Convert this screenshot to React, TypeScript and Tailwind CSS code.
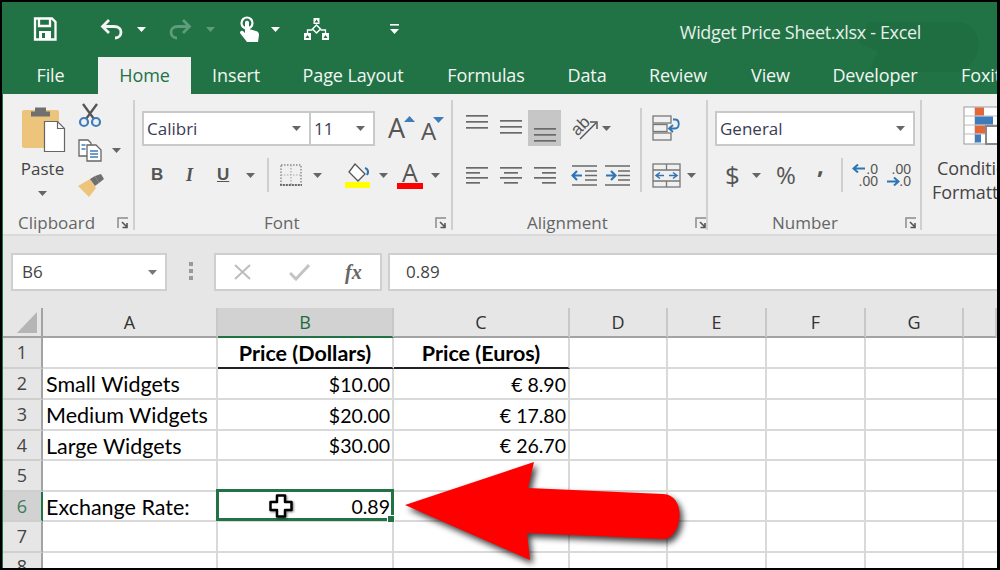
import React from "react";

const Caret = ({ c = "#666", className = "" }: { c?: string; className?: string }) => (
  <svg width="9" height="5" viewBox="0 0 9 5" className={"shrink-0 " + className}><path d="M0 0h9L4.5 5z" fill={c} /></svg>
);
const Launcher = ({ className = "" }: { className?: string }) => (
  <svg width="12" height="12" viewBox="0 0 12 12" className={"shrink-0 " + className} fill="none">
    <path d="M11 1H1v10" stroke="#8a8a8a" strokeWidth="1.5" /><path d="M5 5l5 5M10 6v4.5H5.5" stroke="#555" strokeWidth="1.6" />
  </svg>
);
const Lines = ({ w, ys, spans, className = "", h = 24 }: { w: number; h?: number; ys: number[]; spans: [number, number][]; className?: string }) => (
  <svg width={w} height={h} viewBox={`0 0 ${w} ${h}`} className={"shrink-0 " + className}>
    {ys.map((y, i) => <rect key={i} x={spans[i][0]} y={y} width={spans[i][1] - spans[i][0]} height="1.7" fill="#6a6a6a" />)}
  </svg>
);
const Sep = ({ h, className = "" }: { h: string; className?: string }) => <div className={"w-[2px] shrink-0 bg-[#cfcfcf] " + h + " " + className} />;

const tabs: [string, string][] = [
  ["File", "w-[95px]"], ["Home", "w-[93px]"], ["Insert", "w-[90px]"], ["Page Layout", "w-[144px]"], ["Formulas", "w-[122px]"],
  ["Data", "w-[80px]"], ["Review", "w-[102px]"], ["View", "w-[83px]"], ["Developer", "w-[126px]"],
];

const cols = ["A", "B", "C", "D", "E", "F", "G", ""];
const rows: string[][] = [
  ["", "Price (Dollars)", "Price (Euros)"],
  ["Small Widgets", "$10.00", "€ 8.90"],
  ["Medium Widgets", "$20.00", "€ 17.80"],
  ["Large Widgets", "$30.00", "€ 26.70"],
  ["", "", ""],
  ["Exchange Rate:", "0.89", ""],
  ["", "", ""],
  ["", "", ""],
];
const gridLine = "border-r-2 border-b-2 border-[#d9d9d9]";

function TitleBar() {
  return (
    <div className="relative h-[56px] shrink-0 flex items-center pb-[2px] text-white">
      <svg width="24" height="24" viewBox="0 0 24 24" className="ml-[30px] shrink-0" fill="none">
        <path d="M2 1.5h17l3.5 3.5v17.500H2z" stroke="#fff" strokeWidth="2.300" />
        <path d="M6 2v7h11V2" stroke="#fff" strokeWidth="2.300" />
        <rect x="6" y="14" width="12" height="8" fill="#fff" /><rect x="9" y="16" width="3" height="5" fill="#217346" />
      </svg>
      <svg width="24" height="22" viewBox="0 0 24 22" className="ml-[43px] shrink-0" fill="none" stroke="#f4f4f4" strokeWidth="2.800">
        <path d="M9 2L2.500 8.500 9 15" /><path d="M3 8.500h11c5 0 7 3 7 5.500 0 3-2 6-6 6" />
      </svg>
      <Caret c="#fff" className="ml-[13px]" />
      <svg width="24" height="22" viewBox="0 0 24 22" className="ml-[22px] shrink-0" fill="none" stroke="#5f9c7c" strokeWidth="2.800">
        <path d="M15 2l6.500 6.500L15 15" /><path d="M21 8.500H10c-5 0-7 3-7 5.500 0 3 2 6 6 6" />
      </svg>
      <Caret c="#5f9c7c" className="ml-[14px]" />
      <svg width="21" height="26" viewBox="0 0 21 26" className="ml-[24px] shrink-0">
        <circle cx="8" cy="7" r="5.500" fill="none" stroke="#fff" strokeWidth="2.200" />
        <path d="M6 6.500c0-2.500 4-2.500 4 0V13l7 2c2 .6 3 2 3 4l-1 7H8L1 17c0-2 2-3 3.500-1.500L6 17z" fill="#fff" />
      </svg>
      <Caret c="#fff" className="ml-[11px]" />
      <svg width="25" height="22" viewBox="0 0 25 22" className="ml-[24px] shrink-0" fill="#fff">
        <rect x="9.500" y="0" width="6" height="6" /><rect x="0" y="15" width="7" height="7" /><rect x="18" y="15" width="7" height="7" />
        <path d="M12.500 7l4 4-4 4-4-4z" fill="none" stroke="#fff" strokeWidth="1.500" />
        <path d="M3.500 15v-3h5M21.500 15v-3h-5" fill="none" stroke="#fff" strokeWidth="1.300" />
        <path d="M12.500 1.500l2 3h-4zM3.500 17l2 3h-4zM21.500 17l2 3h-4z" fill="#217346" />
      </svg>
      <svg width="9" height="11" viewBox="0 0 9 11" className="ml-[61px] shrink-0" fill="#fff"><rect width="9" height="1.600" /><path d="M0 5h9l-4.500 5z" /></svg>
      <span className="ml-auto mr-[76px] mt-[6px] text-[18px] tracking-[-0.33px] text-[#e6efe9]">Widget Price Sheet.xlsx - Excel</span>
    </div>
  );
}

function Tabs() {
  return (
    <div className="h-[36px] shrink-0 flex text-[18px] text-[#f2f6f3] tracking-[-0.1px]">
      {tabs.map(([t, w]) =>
        t === "Home" ? (
          <div key={t} className={w + " shrink-0 -mt-[1px] h-[37px] bg-[#f0f0f0] text-[#217346] flex items-center justify-center pb-[1px] z-10"}>{t}</div>
        ) : (
          <div key={t} className={w + " shrink-0 flex items-center justify-center pb-[2px]"}>{t}</div>
        )
      )}
      <div className="pl-[23px] flex items-center pb-[2px]">Foxit</div>
    </div>
  );
}

function Label({ text, w, ml, launcher, lml }: { text: string; w?: string; ml: string; launcher?: boolean; lml?: string }) {
  return (
    <div className="h-[18px] shrink-0 flex items-center text-[17px] text-[#666]">
      <span className={ml + " shrink-0 " + (w || "")}>{text}</span>
      {launcher && <Launcher className={lml} />}
    </div>
  );
}

function Combo({ text, w, caretMl = "ml-auto mr-[8px]", className = "" }: { text: string; w: string; caretMl?: string; className?: string }) {
  return (
    <div className={w + " h-[35px] shrink-0 bg-white border-2 border-[#c9c9c9] flex items-center pl-[3px] text-[17px] text-[#3b3b55] " + className}>
      <span>{text}</span>
      <Caret className={caretMl} />
    </div>
  );
}

function Clipboard() {
  return (
    <div className="w-[132px] shrink-0 border-r-2 border-[#cfcfcf] flex flex-col h-[130px]">
      <div className="h-[114px] shrink-0 flex">
        <div className="ml-[14px] w-[51px] shrink-0 flex flex-col items-center">
          <svg width="44" height="46" viewBox="0 0 44 46" className="mt-[6px] ml-[2px]">
            <rect x="0" y="4" width="37" height="38" rx="2" fill="#edc47c" />
            <path d="M13 1.500h11v4h4v5H9v-5h4z" fill="#707070" />
            <path d="M22.500 15.500h13l7 7v23h-20z" fill="#fff" stroke="#666" strokeWidth="1.200" />
            <path d="M35.500 15.500v7h7" fill="none" stroke="#666" strokeWidth="1.200" />
          </svg>
          <span className="mt-[6px] h-[22px] text-[17px] leading-[22px] text-[#444]">Paste</span>
          <Caret className="mt-[11px]" />
        </div>
        <div className="ml-[10px] flex flex-col">
          <svg width="24" height="25" viewBox="0 0 24 25" className="mt-[3px]" fill="none">
            <path d="M8 16L19 1M16 16L5 1" stroke="#555" strokeWidth="2.300" />
            <circle cx="6" cy="19" r="4" stroke="#3f7cbb" strokeWidth="2.200" /><circle cx="18" cy="19" r="4" stroke="#3f7cbb" strokeWidth="2.200" />
          </svg>
          <div className="mt-[11px] h-[23px] flex items-center">
            <svg width="25" height="23" viewBox="0 0 25 23" fill="none">
              <path d="M1 1h9l3 3v13H1z" fill="#fff" stroke="#666" strokeWidth="1.300" />
              <path d="M9 6h9l5 5v11H9z" fill="#fff" stroke="#666" strokeWidth="1.300" />
              <path d="M12 12h8M12 15h8M12 18h8" stroke="#3f7cbb" strokeWidth="1.400" />
              <path d="M3.500 6h4M3.500 10h4" stroke="#3f7cbb" strokeWidth="1.400" />
            </svg>
            <Caret className="ml-[9px]" />
          </div>
          <svg width="26" height="23" viewBox="0 0 26 23" className="mt-[12px]">
            <path d="M0 12l12-7 6 9-7 9z" fill="#edc47c" />
            <path d="M12 5l5-3 4 7-4 3z" fill="#6f6f6f" /><path d="M17 2l6-2 3 5-5 4z" fill="#6f6f6f" />
          </svg>
        </div>
      </div>
      <Label text="Clipboard" ml="ml-[15px]" w="w-[99px]" launcher />
    </div>
  );
}

function Font() {
  return (
    <div className="w-[318px] shrink-0 border-r-2 border-[#cfcfcf] flex flex-col h-[130px]">
      <div className="h-[114px] shrink-0 pt-[11px] flex flex-col">
        <div className="flex items-center h-[35px]">
          <Combo text="Calibri" w="w-[169px]" className="ml-[7px]" />
          <Combo text="11" w="w-[66px]" className="-ml-[2px]" />
          <div className="ml-[13px] relative w-[32px] h-[35px] flex items-center text-[27px] text-[#555]">
            A
            <svg width="11" height="6" viewBox="0 0 11 6" className="absolute left-[16px] top-[5px]"><path d="M5.500 0L11 6H0z" fill="#3f7cbb" /></svg>
          </div>
          <div className="ml-[3px] relative w-[32px] h-[35px] flex items-center pt-[4px] text-[24px] text-[#555]">
            A
            <svg width="11" height="6" viewBox="0 0 11 6" className="absolute left-[12px] top-[6px]"><path d="M0 0h11L5.500 6z" fill="#3f7cbb" /></svg>
          </div>
        </div>
        <div className="mt-[12px] h-[34px] flex items-center text-[17px] text-[#555]">
          <span className="ml-[16px] w-[14px] font-bold font-['Liberation_Sans',sans-serif]">B</span>
          <span className="ml-[21px] w-[10px] italic font-bold font-['Liberation_Serif',serif] text-[18px]">I</span>
          <span className="ml-[21px] w-[15px] font-bold underline font-['Liberation_Sans',sans-serif]">U</span>
          <Caret className="ml-[14px]" />
          <Sep h="h-[34px]" className="ml-[12px]" />
          <svg width="22" height="22" viewBox="0 0 22 22" className="ml-[11px] shrink-0" fill="none">
            <rect x="1" y="1" width="20" height="20" stroke="#888" strokeWidth="1.400" strokeDasharray="1.500 1.500" />
            <path d="M11 1v20M1 11h20" stroke="#aaa" strokeWidth="1.200" strokeDasharray="1.500 1.500" />
            <path d="M0 21h22" stroke="#555" strokeWidth="1.600" strokeDasharray="2 1" />
          </svg>
          <Caret className="ml-[11px]" />
          <svg width="25" height="25" viewBox="0 0 25 25" className="ml-[23px] shrink-0" fill="none">
            <path d="M10 1l10 10-7 7-9-9z" fill="#fff" stroke="#555" strokeWidth="1.300" />
            <path d="M20 5c3 1 4 4 2 7" stroke="#2f75b5" strokeWidth="2.200" />
            <rect x="0" y="19" width="25" height="6" fill="#ffff00" />
          </svg>
          <Caret className="ml-[9px]" />
          <div className="ml-[9px] relative w-[26px] h-[28px] flex justify-center text-[25px] leading-[22px] text-[#555]">
            A
            <div className="absolute left-0 bottom-0 w-[26px] h-[6px] bg-[#ff0000]" />
          </div>
          <Caret className="ml-[8px]" />
        </div>
      </div>
      <Label text="Font" ml="ml-[129px]" w="w-[171px]" launcher />
    </div>
  );
}

function Alignment() {
  const l: [number, number][] = [[0, 22], [0, 22], [0, 22], [0, 22]];
  return (
    <div className="w-[255px] shrink-0 border-r-2 border-[#cfcfcf] flex flex-col h-[130px]">
      <div className="h-[114px] shrink-0 flex">
        <div className="w-[187px] shrink-0 flex flex-col pt-[10px]">
          <div className="h-[36px] flex items-center">
            <Lines w={22} h={36} ys={[5, 11, 17]} spans={l} className="ml-[13px]" />
            <Lines w={22} h={36} ys={[10, 16, 22]} spans={l} className="ml-[12px]" />
            <div className="ml-[6px] w-[33px] h-[36px] bg-[#c6c6c6] flex justify-center">
              <Lines w={22} h={36} ys={[18, 24, 30]} spans={l} />
            </div>
            <svg width="27" height="24" viewBox="0 0 27 24" className="ml-[10px] shrink-0">
              <text x="1" y="17" transform="rotate(-45 8 12)" fontSize="17" fontFamily="Liberation Sans" fill="#555">ab</text>
              <path d="M9 23L25 7" stroke="#555" strokeWidth="1.500" /><path d="M19 6l7 0 0 7" stroke="#555" strokeWidth="1.500" fill="none" />
            </svg>
            <Caret className="ml-[4px]" />
          </div>
          <div className="mt-[12px] h-[34px] flex items-center">
            <Lines w={22} h={18} ys={[1, 6, 11, 16]} spans={[[0, 22], [0, 14], [0, 22], [0, 14]]} className="ml-[13px]" />
            <Lines w={22} h={18} ys={[1, 6, 11, 16]} spans={[[0, 22], [4, 18], [0, 22], [4, 18]]} className="ml-[12px]" />
            <Lines w={22} h={18} ys={[1, 6, 11, 16]} spans={[[0, 22], [8, 22], [0, 22], [8, 22]]} className="ml-[12px]" />
            <svg width="26" height="21" viewBox="0 0 26 21" className="ml-[15px] shrink-0" fill="none">
              <path d="M1 1h25M14 6h12M14 10.500h12M14 15h12M1 20h25" stroke="#6a6a6a" strokeWidth="1.600" />
              <path d="M11 10.500H2M6 6l-4.500 4.500L6 15" stroke="#2f75b5" strokeWidth="2.200" />
            </svg>
            <svg width="26" height="21" viewBox="0 0 26 21" className="ml-[8px] shrink-0" fill="none">
              <path d="M0 1h25M13 6h12M13 10.500h12M13 15h12M0 20h25" stroke="#6a6a6a" strokeWidth="1.600" />
              <path d="M1 10.500h9M6 6l4.500 4.500L6 15" stroke="#2f75b5" strokeWidth="2.200" />
            </svg>
          </div>
        </div>
        <Sep h="h-[84px]" className="mt-[8px]" />
        <div className="flex flex-col ml-[10px] pt-[15px]">
          <svg width="29" height="26" viewBox="0 0 29 26" fill="none">
            <rect x="1" y="1" width="18" height="7" stroke="#777" strokeWidth="1.300" /><rect x="1" y="9.500" width="14" height="7" stroke="#777" strokeWidth="1.300" /><rect x="1" y="18" width="18" height="7" stroke="#777" strokeWidth="1.300" />
            <path d="M21 4.500h2c5 0 5 9 0 9h-5M21 10l-4 3.500 4 3.500" stroke="#2f75b5" strokeWidth="1.800" />
          </svg>
          <div className="mt-[22px] flex items-center">
            <svg width="29" height="25" viewBox="0 0 29 25" fill="none">
              <rect x="1" y="1" width="27" height="23" stroke="#777" strokeWidth="1.300" />
              <path d="M1 7h27M1 18h27M14.500 1v6M14.500 18v6" stroke="#777" strokeWidth="1.300" />
              <path d="M4 12.500h8M8 9.500l-4 3 4 3M25 12.500h-8M21 9.500l4 3-4 3" stroke="#2f75b5" strokeWidth="1.500" />
            </svg>
            <Caret className="ml-[6px]" />
          </div>
        </div>
      </div>
      <Label text="Alignment" ml="ml-[74px]" w="w-[168px]" launcher />
    </div>
  );
}

function NumberGroup() {
  return (
    <div className="w-[214px] shrink-0 border-r-2 border-[#cfcfcf] flex flex-col h-[130px]">
      <div className="h-[114px] shrink-0 pt-[11px] flex flex-col">
        <Combo text="General" w="w-[200px]" className="ml-[7px]" />
        <div className="mt-[12px] h-[34px] flex items-center text-[#555]">
          <span className="ml-[17px] w-[16px] text-[26px] leading-[34px]">$</span>
          <Caret className="ml-[11px]" />
          <span className="ml-[15px] w-[24px] text-[24px] leading-[34px]">%</span>
          <span className="ml-[17px] w-[8px] text-[24px] font-bold leading-[34px] -translate-y-[10px]">,</span>
          <Sep h="h-[34px]" className="ml-[16px]" />
          <div className="ml-[9px] w-[26px] h-[24px] relative text-[14px] leading-[12px] text-[#555] font-['Liberation_Sans',sans-serif]">
            <div className="text-right">.0</div><div className="text-right">.00</div>
            <svg width="13" height="9" viewBox="0 0 13 9" className="absolute left-0 top-[1px]" fill="none"><path d="M13 4.500H2M6 .5l-4.500 4L6 8.500" stroke="#2f75b5" strokeWidth="2" /></svg>
          </div>
          <div className="ml-[9px] w-[24px] h-[24px] relative text-[14px] leading-[12px] text-[#555] font-['Liberation_Sans',sans-serif]">
            <div className="text-right">.00</div><div className="text-right">.0</div>
            <svg width="13" height="9" viewBox="0 0 13 9" className="absolute left-0 top-[14px]" fill="none"><path d="M0 4.500h11M7 .5l4.500 4-4.500 4" stroke="#2f75b5" strokeWidth="2" /></svg>
          </div>
        </div>
      </div>
      <Label text="Number" ml="ml-[64px]" w="w-[133px]" launcher />
    </div>
  );
}

function Styles() {
  return (
    <div className="flex-1 min-w-0 overflow-hidden flex flex-col">
      <div className="ml-[41px] mt-[6px] w-[48px] h-[39px] shrink-0 relative">
        <svg width="48" height="39" viewBox="0 0 48 39">
          <rect x="1" y="1" width="46" height="37" fill="#fff" stroke="#999" />
          <path d="M1 10h46M1 19h46M1 28h46M12 1v37" stroke="#bbb" />
          <rect x="12" y="1.500" width="9" height="8" fill="#e2683c" /><rect x="12" y="10.500" width="18" height="8" fill="#3f7cbb" />
          <rect x="12" y="19.500" width="14" height="8" fill="#e2683c" /><rect x="12" y="28.500" width="6" height="8" fill="#3f7cbb" />
        </svg>
        <div className="absolute left-[22px] top-[19px] w-[26px] h-[20px] bg-white border-2 border-[#888]" />
      </div>
      <div className="ml-[10px] mt-[11px] w-[120px] text-[18px] leading-[24px] text-[#444] whitespace-nowrap tracking-[-0.1px]">
        <div className="pl-[5px]">Conditional</div>
        <div>Formatting</div>
      </div>
    </div>
  );
}

function FormulaBar() {
  return (
    <div className="h-[72px] shrink-0 bg-[#e6e6e6] pt-[17px]">
      <div className="flex h-[38px] text-[17px] text-[#444]">
        <div className="ml-[8px] w-[156px] shrink-0 bg-white border-2 border-[#cfcfcf] flex items-center pl-[9px]">
          <span>B6</span><Caret c="#777" className="ml-auto mr-[8px]" />
        </div>
        <div className="w-[47px] shrink-0 flex flex-col items-center justify-center gap-[3px] pb-[3px]">
          <div className="w-[4px] h-[4px] bg-[#999]" /><div className="w-[4px] h-[4px] bg-[#999]" /><div className="w-[4px] h-[4px] bg-[#999]" />
        </div>
        <div className="w-[168px] shrink-0 bg-white border-2 border-[#cfcfcf] flex items-center">
          <svg width="18" height="16" viewBox="0 0 18 16" className="ml-[18px] shrink-0" fill="none"><path d="M1 1l15 14M16 1L1 15" stroke="#bdbdbd" strokeWidth="2" /></svg>
          <svg width="21" height="17" viewBox="0 0 21 17" className="ml-[37px] shrink-0" fill="none"><path d="M1 9l6 6L20 1" stroke="#c4c4c4" strokeWidth="3" /></svg>
          <span className="ml-[35px] italic font-bold text-[20px] text-[#666] font-['Liberation_Serif',serif]">fx</span>
        </div>
        <div className="ml-[6px] flex-1 bg-white border-y-2 border-l-2 border-[#cfcfcf] flex items-center pl-[16px]">0.89</div>
      </div>
    </div>
  );
}

function Sheet() {
  return (
    <div className="flex-1 min-h-0 overflow-hidden bg-white grid grid-cols-[40px_175px_176px_176px_98px_99px_99px_98px_1fr] grid-rows-[30px_31px_31px_31px_30px_31px_30px_31px_1fr] font-['Lato',sans-serif] text-[19.5px] text-black">
      <div className="bg-[#e6e6e6] border-r-2 border-b-2 border-[#a3a3a3] flex items-end justify-end pr-[4px] pb-[3px]">
        <svg width="20" height="21" viewBox="0 0 20 21"><path d="M20 0v21H0z" fill="#b5b5b5" /></svg>
      </div>
      {cols.map((c) => (
        <div key={"h" + c} className={(c === "B" ? "bg-[#d2d2d2] border-b-[#217346] text-[#1d6b40]" : "bg-[#e6e6e6] border-b-[#a3a3a3] text-[#333]") + " border-b-2 border-r-2 border-r-[#c8c8c8] flex items-center justify-center text-[18px] font-['Open_Sans',sans-serif]"}>{c}</div>
      ))}
      {rows.map((r, i) => (
        <React.Fragment key={i}>
          <div className={(i === 5 ? "bg-[#d2d2d2] text-[#3b7d5c] border-r-[#217346]" : "bg-[#e6e6e6] text-[#444] border-r-[#a3a3a3]") + " border-b-2 border-b-[#cfcfcf] border-r-2 flex items-center justify-center text-[18px] font-['Open_Sans',sans-serif]"}>{i + 1}</div>
          <div className={gridLine + " flex items-center pl-[3px] pt-[2px] text-[21.5px] whitespace-nowrap"}>{r[0]}</div>
          <div className={"relative flex items-center pt-[2px] whitespace-nowrap " + (i === 0 ? "justify-center font-bold text-[21.5px] border-r-2 border-r-[#d9d9d9] border-b-2 border-b-[#222]" : "justify-end pr-[2px] " + gridLine)}>
            {r[1]}
            {i === 5 && (
              <>
                <div className="absolute -left-[2px] -top-[3px] -right-[2px] -bottom-[1px] border-[3px] border-[#217346]" />
                <div className="absolute -right-[3px] -bottom-[3px] w-[8px] h-[8px] bg-[#217346] border border-white" />
                <svg width="24" height="24" viewBox="0 0 24 24" className="absolute left-[51px] top-[2px] drop-shadow-[1px_1px_1px_rgba(0,0,0,0.5)]">
                  <path d="M8 1.500h8v6.500h6.500v8H16v6.500H8V16H1.500V8H8z" fill="#fff" stroke="#000" strokeWidth="2.500" strokeLinejoin="round" />
                </svg>
              </>
            )}
          </div>
          <div className={"flex items-center pt-[2px] whitespace-nowrap " + (i === 0 ? "justify-center font-bold text-[21.5px] border-r-2 border-r-[#d9d9d9] border-b-2 border-b-[#222]" : "justify-end pr-[2px] " + gridLine)}>{r[2]}</div>
          {[0, 1, 2, 3].map((k) => <div key={k} className={gridLine} />)}
          <div className="border-b-2 border-[#d9d9d9]" />
        </React.Fragment>
      ))}
    </div>
  );
}

export default function App() {
  return (
    <div className="relative w-[1000px] h-[570px] overflow-hidden bg-black pt-[2px] pl-[2px] pr-[3px] pb-[2px] font-['Open_Sans','Noto_Sans',sans-serif]">
      <div className="relative w-full h-full overflow-hidden flex flex-col border-l border-[#217346] bg-[#217346]">
        <svg width="140" height="90" viewBox="0 0 140 90" className="absolute left-[845px] top-0"><path d="M20 20h90c25 0 30 40 0 50H20l10-20-20-10z" fill="#1e6a40" opacity="0.6" /></svg>
        <div className="relative flex flex-col">
          <TitleBar />
          <Tabs />
        </div>
        <div className="relative h-[142px] shrink-0 bg-[#f0f0f0] border-b-2 border-[#dadada] pt-[6px] flex text-[#444]">
          <Clipboard />
          <Font />
          <Alignment />
          <NumberGroup />
          <Styles />
        </div>
        <FormulaBar />
        <Sheet />
      </div>
      <svg width="285" height="110" viewBox="0 0 285 110" className="absolute left-[400px] top-[455px] overflow-visible drop-shadow-[3px_4px_3px_rgba(0,0,0,0.75)]">
        <path d="M5 50L134 7l-6 26 135 6c25 1 19 45 0 45l-136-6 3 27z" fill="#ff0000" />
      </svg>
    </div>
  );
}
